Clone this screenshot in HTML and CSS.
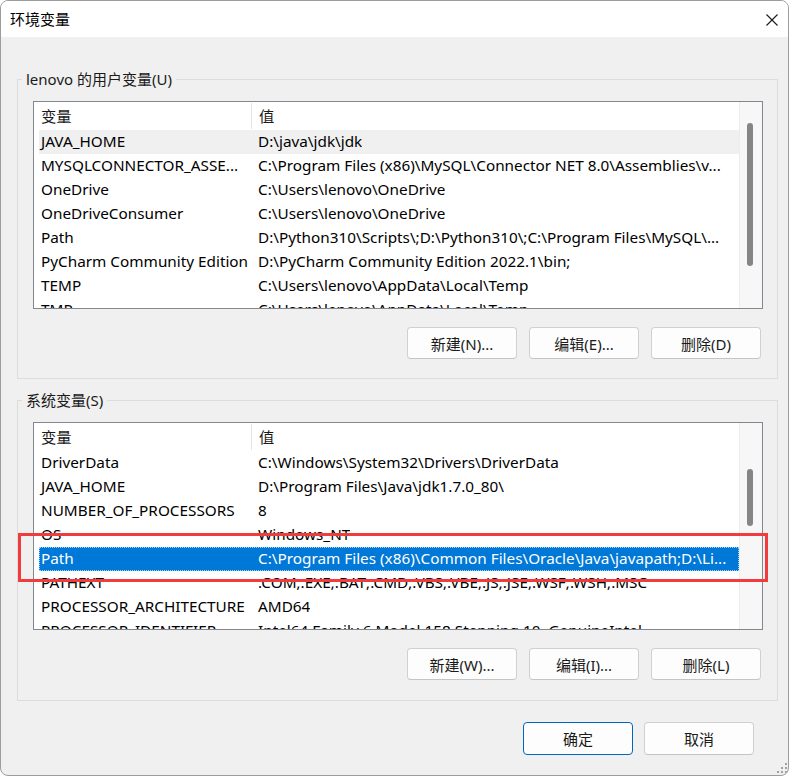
FILE: index.html
```html
<!DOCTYPE html>
<html lang="zh-CN">
<head>
    <meta charset="UTF-8">
    <title>环境变量</title>
    <link rel="stylesheet" href="styles.css">
</head>
<body>
    <div class="window">
        <div class="titlebar">
            <span class="title">环境变量</span>
            <svg class="close" width="12" height="12" viewBox="0 0 12 12">
                <path d="M0.5 0.5 L11.5 11.5 M11.5 0.5 L0.5 11.5" stroke="#1a1a1a" stroke-width="1.1" fill="none"/>
            </svg>
        </div>

        <div class="content">
            <fieldset class="group">
                <legend>lenovo 的用户变量(U)</legend>
                <div class="list">
                    <div class="list-body">
                        <div class="row header"><span class="name">变量</span><span class="value">值</span></div>
                        <div class="row active"><span class="name">JAVA_HOME</span><span class="value">D:\java\jdk\jdk</span></div>
                        <div class="row"><span class="name">MYSQLCONNECTOR_ASSE...</span><span class="value">C:\Program Files (x86)\MySQL\Connector NET 8.0\Assemblies\v...</span></div>
                        <div class="row"><span class="name">OneDrive</span><span class="value">C:\Users\lenovo\OneDrive</span></div>
                        <div class="row"><span class="name">OneDriveConsumer</span><span class="value">C:\Users\lenovo\OneDrive</span></div>
                        <div class="row"><span class="name">Path</span><span class="value">D:\Python310\Scripts\;D:\Python310\;C:\Program Files\MySQL\...</span></div>
                        <div class="row"><span class="name">PyCharm Community Edition</span><span class="value">D:\PyCharm Community Edition 2022.1\bin;</span></div>
                        <div class="row"><span class="name">TEMP</span><span class="value">C:\Users\lenovo\AppData\Local\Temp</span></div>
                        <div class="row"><span class="name">TMP</span><span class="value">C:\Users\lenovo\AppData\Local\Temp</span></div>
                    </div>
                    <div class="scrollbar"><div class="thumb thumb-user"></div></div>
                </div>
                <div class="buttons">
                    <button class="btn">新建(N)...</button>
                    <button class="btn">编辑(E)...</button>
                    <button class="btn">删除(D)</button>
                </div>
            </fieldset>

            <fieldset class="group">
                <legend>系统变量(S)</legend>
                <div class="list">
                    <div class="list-body">
                        <div class="row header"><span class="name">变量</span><span class="value">值</span></div>
                        <div class="row"><span class="name">DriverData</span><span class="value">C:\Windows\System32\Drivers\DriverData</span></div>
                        <div class="row"><span class="name">JAVA_HOME</span><span class="value">D:\Program Files\Java\jdk1.7.0_80\</span></div>
                        <div class="row"><span class="name">NUMBER_OF_PROCESSORS</span><span class="value">8</span></div>
                        <div class="row"><span class="name">OS</span><span class="value">Windows_NT</span></div>
                        <div class="row selected"><span class="name">Path</span><span class="value">C:\Program Files (x86)\Common Files\Oracle\Java\javapath;D:\Li...</span></div>
                        <div class="row"><span class="name">PATHEXT</span><span class="value">.COM;.EXE;.BAT;.CMD;.VBS;.VBE;.JS;.JSE;.WSF;.WSH;.MSC</span></div>
                        <div class="row"><span class="name">PROCESSOR_ARCHITECTURE</span><span class="value">AMD64</span></div>
                        <div class="row"><span class="name">PROCESSOR_IDENTIFIER</span><span class="value">Intel64 Family 6 Model 158 Stepping 10, GenuineIntel</span></div>
                    </div>
                    <div class="scrollbar"><div class="thumb thumb-system"></div></div>
                </div>
                <div class="buttons">
                    <button class="btn">新建(W)...</button>
                    <button class="btn">编辑(I)...</button>
                    <button class="btn">删除(L)</button>
                </div>
            </fieldset>

            <div class="footer">
                <button class="btn default">确定</button>
                <button class="btn">取消</button>
            </div>
        </div>

        <div class="highlight"></div>

        <svg class="grip" width="10" height="10" viewBox="0 0 10 10">
            <rect x="8" y="0" width="2" height="2" fill="#a0a0a0"/>
            <rect x="4" y="4" width="2" height="2" fill="#a0a0a0"/>
            <rect x="8" y="4" width="2" height="2" fill="#a0a0a0"/>
            <rect x="0" y="8" width="2" height="2" fill="#a0a0a0"/>
            <rect x="4" y="8" width="2" height="2" fill="#a0a0a0"/>
            <rect x="8" y="8" width="2" height="2" fill="#a0a0a0"/>
        </svg>
    </div>
</body>
</html>
```

FILE: styles.css
```css
body {
    margin: 0;
    background: #ffffff;
    font-family: "Noto Sans", "Noto Sans CJK SC", sans-serif;
    font-size: 15.3px;
    color: #000;
}
.window {
    position: relative;
    width: 787px;
    height: 774px;
    border: 1px solid #9c9c9c;
    border-radius: 8px;
    background: #f0f0f0;
    overflow: hidden;
}
.titlebar {
    height: 36px;
    background: #ffffff;
    display: flex;
    align-items: center;
    justify-content: space-between;
    padding: 0 10px 0 9px;
}
.title {
    font-family: "Noto Sans CJK SC", sans-serif;
    font-size: 15px;
    line-height: 20px;
}
.close {
    margin-top: 2px;
}
.content {
    padding: 32px 10px 0 16px;
}
.group {
    margin: 0;
    border: 1px solid #dcdcdc;
    padding: 12px 14px 19px 15px;
}
.group + .group {
    margin-top: 11px;
    padding-bottom: 20px;
}
.group legend {
    margin-left: -11px;
    padding: 0 4px;
    line-height: 20px;
    font-size: 15px;
    color: #1a1a1a;
}
.list {
    display: flex;
    height: 206px;
    border: 1px solid #828790;
    background: #ffffff;
    overflow: hidden;
}
.list-body {
    flex: 1;
    padding-left: 5px;
    overflow: hidden;
}
.row {
    display: flex;
    height: 24px;
    line-height: 23px;
    white-space: nowrap;
}
.row .name {
    width: 210px;
    flex: none;
    padding-left: 2px;
    overflow: hidden;
    text-overflow: ellipsis;
}
.row .value {
    padding-left: 7px;
    overflow: hidden;
}
.header {
    height: 28px;
    line-height: 28px;
    color: #1a1a1a;
}
.header .name {
    border-right: 1px solid #e5e5e5;
    margin: 1px 0;
    line-height: 26px;
}
.active {
    background: #f0f0f0;
}
.selected {
    background: #0078d7;
    color: #ffffff;
    outline: 1px dotted #9ccfff;
    outline-offset: -1px;
}
.scrollbar {
    width: 22px;
    flex: none;
    background: #f7f7f7;
    border-left: 1px solid #ececec;
}
.thumb {
    width: 6px;
    margin-left: 7px;
    background: #858585;
    border-radius: 3px;
}
.thumb-user {
    margin-top: 21px;
    height: 143px;
}
.thumb-system {
    margin-top: 46px;
    height: 57px;
}
.buttons {
    display: flex;
    justify-content: flex-end;
    gap: 12px;
    margin-top: 18px;
    padding-right: 2px;
}
.btn {
    width: 110px;
    height: 32px;
    font-family: "Noto Sans", "Noto Sans CJK SC", sans-serif;
    font-size: 15px;
    color: #1a1a1a;
    background: #fdfdfd;
    border: 1px solid #d0d0d0;
    border-bottom-color: #c4c4c4;
    border-radius: 4px;
    padding: 0;
}
.footer {
    display: flex;
    justify-content: flex-end;
    gap: 11px;
    margin-top: 21px;
    padding-right: 24px;
}
.footer .btn {
    height: 33px;
}
.default {
    border: 1px solid #0067c0;
}
.highlight {
    position: absolute;
    left: 17px;
    top: 532px;
    width: 744px;
    height: 43px;
    border: 3px solid #f03c3c;
}
.grip {
    position: absolute;
    right: 1px;
    bottom: 2px;
}
```
